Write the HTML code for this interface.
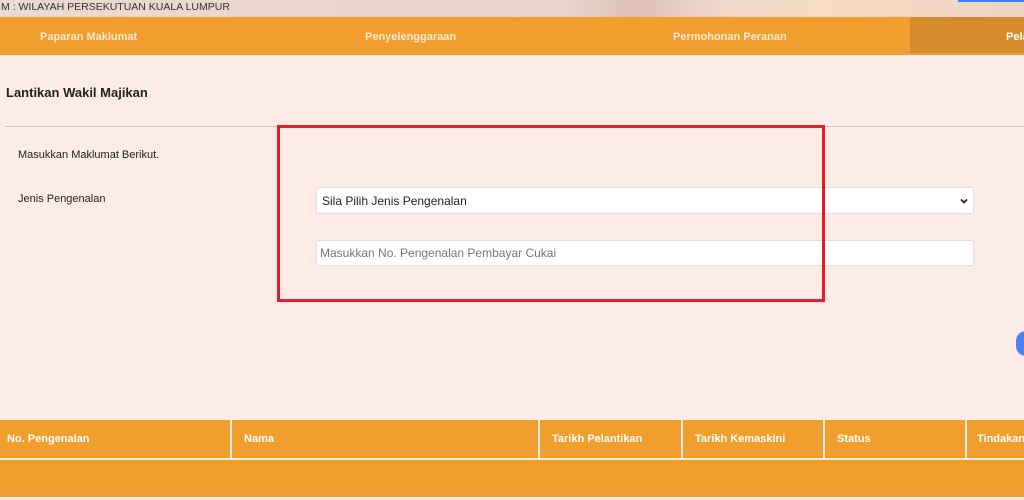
<!DOCTYPE html>
<html><head><style>
*{margin:0;padding:0;box-sizing:border-box}
body{width:1024px;height:500px;overflow:hidden;background:#fdebe6;font-family:"Liberation Sans",sans-serif;position:relative}
.top{position:absolute;left:0;top:0;width:1024px;height:17px;background:linear-gradient(90deg,#ead9d2 0%,#e9d5cd 55%,#dcc0b5 62%,#f1d8cc 70%,#f5dcc2 80%,#efd4c6 100%);font-size:10.5px;color:#333;padding:1px 0 0 1px}
.blue{position:absolute;left:958px;top:0;width:66px;height:2px;background:#3d7df0}
.nav{position:absolute;left:0;top:17px;width:1024px;height:38px;background:#f09f2e}
.nav span{position:absolute;top:14px;font-size:11px;font-weight:bold;color:#fbe7d2}
.act{position:absolute;left:910px;top:17px;width:114px;height:36px;background:#d68c2a}
.t{position:absolute;font-size:12px;color:#222}
.line{position:absolute;left:5px;top:126px;width:1019px;height:1px;background:#cfc7c4}
.red{position:absolute;left:277px;top:125px;width:548px;height:177px;border:3px solid #e61c28;z-index:5}
.inp{position:absolute;left:316px;width:658px;background:#fff;border:1px solid #e6dcda;border-radius:3px;font-size:12px;padding-left:5px}
.th{position:absolute;top:420px;height:38px;background:#f09f2e;color:#fff;font-size:11px;font-weight:bold;padding:13px 0 0 7px}
</style></head><body>
<div class="top">M : WILAYAH PERSEKUTUAN KUALA LUMPUR</div>
<div class="blue"></div>
<div class="nav">
<span style="left:40px">Paparan Maklumat</span>
<span style="left:365px">Penyelenggaraan</span>
<span style="left:673px">Permohonan Peranan</span>
</div>
<div class="act"><span style="position:absolute;left:96px;top:14px;font-size:11px;font-weight:bold;color:#fff">Pela</span></div>
<div class="t" style="left:6px;top:85px;font-weight:bold;font-size:13px">Lantikan Wakil Majikan</div>
<div class="line"></div>
<div class="t" style="left:18px;top:149px;font-size:11px">Masukkan Maklumat Berikut.</div>
<div class="t" style="left:18px;top:193px;font-size:11px">Jenis Pengenalan</div>
<div class="red"></div>
<div class="inp" style="top:187px;height:27px;line-height:26px;color:#222">Sila Pilih Jenis Pengenalan<svg style="position:absolute;right:5px;top:10px" width="8" height="6" viewBox="0 0 8 6"><path d="M1 1.5L4 4.5L7 1.5" stroke="#222" stroke-width="1.8" fill="none"/></svg></div>
<div class="inp" style="top:240px;height:26px;line-height:25px;color:#777;padding-left:3px">Masukkan No. Pengenalan Pembayar Cukai</div>
<div style="position:absolute;left:1016px;top:331px;width:20px;height:25px;border-radius:10px;background:#4a82f2"></div>
<div class="th" style="left:0;width:230px">No. Pengenalan</div>
<div class="th" style="left:232px;width:306px;padding-left:12px">Nama</div>
<div class="th" style="left:540px;width:141px;padding-left:12px">Tarikh Pelantikan</div>
<div class="th" style="left:683px;width:140px;padding-left:12px">Tarikh Kemaskini</div>
<div class="th" style="left:825px;width:140px;padding-left:12px">Status</div>
<div class="th" style="left:967px;width:57px;padding-left:10px">Tindakan</div>
<div style="position:absolute;left:0;top:460px;width:1024px;height:37px;background:#f09f2e"></div>
</body></html>
